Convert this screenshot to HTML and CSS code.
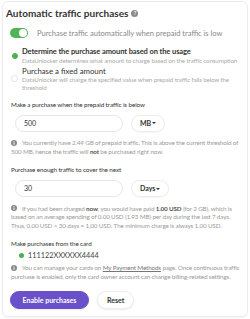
FILE: index.html
```html
<!DOCTYPE html>
<html>
<head>
<meta charset="utf-8">
<link rel="stylesheet" href="styles.css">
</head>
<body>
<div class="card">
  <div class="title">Automatic traffic purchases <span class="help">?</span></div>
  <div class="toggle-row">
    <span class="toggle"><span class="knob"></span></span>
    <span class="toggle-label">Purchase traffic automatically when prepaid traffic is low</span>
  </div>
  <div class="radio-row">
    <span class="radio checked"></span>
    <div class="radio-text">
      <div class="radio-title bold">Determine the purchase amount based on the usage</div>
      <div class="radio-desc">DataUnlocker determines what amount to charge based on the traffic consumption</div>
    </div>
  </div>
  <div class="radio-row second">
    <span class="radio"></span>
    <div class="radio-text">
      <div class="radio-title">Purchase a fixed amount</div>
      <div class="radio-desc">DataUnlocker will charge the specified value when prepaid traffic falls below the threshold</div>
    </div>
  </div>

  <div class="field-label first">Make a purchase when the prepaid traffic is below</div>
  <div class="inputs">
    <div class="input">500</div>
    <div class="select">MB <span class="caret"></span></div>
  </div>
  <div class="info"><svg class="i" viewBox="0 0 12 12"><circle cx="6" cy="6" r="6" fill="#888"/><rect x="5" y="5" width="2" height="4.5" fill="#fff"/><rect x="5" y="2.5" width="2" height="1.7" fill="#fff"/></svg>You currently have 2.49 GB of prepaid traffic. This is above the current threshold of 500 MB, hence the traffic will <b>not</b> be purchased right now.</div>

  <div class="field-label">Purchase enough traffic to cover the next</div>
  <div class="inputs">
    <div class="input">30</div>
    <div class="select">Days <span class="caret"></span></div>
  </div>
  <div class="info"><svg class="i" viewBox="0 0 12 12"><circle cx="6" cy="6" r="6" fill="#888"/><rect x="5" y="5" width="2" height="4.5" fill="#fff"/><rect x="5" y="2.5" width="2" height="1.7" fill="#fff"/></svg>If you had been charged <b>now</b>, you would have paid <b>1.00 USD</b> (for 2 GB), which is based on an average spending of 0.00 USD (1.93 MB) per day during the last 7 days. Thus, 0.00 USD × 30 days = 1.00 USD. The minimum charge is always 1.00 USD.</div>

  <div class="field-label">Make purchases from the card</div>
  <div class="card-row"><span class="dot"></span>111122XXXXXX4444</div>
  <div class="info tight"><svg class="i" viewBox="0 0 12 12"><circle cx="6" cy="6" r="6" fill="#888"/><rect x="5" y="5" width="2" height="4.5" fill="#fff"/><rect x="5" y="2.5" width="2" height="1.7" fill="#fff"/></svg>You can manage your cards on <u>My Payment Methods</u> page. Once continuous traffic purchase is enabled, only the card owner account can change billing-related settings.</div>

  <div class="buttons">
    <button class="btn primary">Enable purchases</button>
    <button class="btn">Reset</button>
  </div>
</div>
</body>
</html>
```

FILE: styles.css
```css
* { box-sizing: border-box; }
body {
  margin: 0;
  width: 250px;
  height: 319px;
  background: #fff;
  font-family: "Lato", "Noto Sans", sans-serif;
  color: #333;
  overflow: hidden;
}
.card {
  margin: 1px 2px 0 2px;
  height: 316px;
  border: 1px solid #ececec;
  border-radius: 6px;
  box-shadow: 0 1px 2px rgba(0,0,0,0.06);
  padding: 5px 2px 0 3px;
}
.title {
  font-weight: bold;
  font-size: 10px;
  line-height: 13px;
  display: flex;
  align-items: center;
  gap: 3px;
}
.help {
  width: 7px; height: 7px;
  border-radius: 50%;
  background: #8a8a8a;
  color: #fff;
  font-size: 5.5px;
  line-height: 7px;
  text-align: center;
}
.toggle-row {
  display: flex;
  align-items: center;
  gap: 9px;
  margin: 8px 0 0 4px;
}
.toggle {
  width: 18px; height: 10px;
  background: #52b45a;
  border-radius: 5px;
  position: relative;
}
.knob {
  position: absolute;
  right: 1px; top: 1px;
  width: 8px; height: 8px;
  border-radius: 50%;
  background: #fff;
}
.toggle-label {
  font-size: 7.5px;
  color: #888;
}
.radio-row {
  display: flex;
  gap: 4px;
  margin: 9px 0 0 5px;
}
.radio-row.second { margin-top: 0; }
.radio {
  flex: none;
  width: 7px; height: 7px;
  border-radius: 50%;
  margin-top: 9px;
  border: 1px solid #e4e4e4;
}
.radio.checked { width: 6px; height: 6px; background: #4caf50; border-color: #4caf50; margin: 6px 0.5px 0 0.5px; }
.radio-title { font-size: 7.8px; line-height: 10px; color: #333; }
.radio-title.bold { font-weight: bold; font-size: 7.5px; letter-spacing: -0.1px; }
.radio-desc { font-size: 6.2px; line-height: 8.5px; color: #aaa; letter-spacing: -0.12px; }
.field-label {
  font-size: 6.3px;
  line-height: 9px;
  margin: 9px 0 0 5px;
  color: #333;
  letter-spacing: -0.1px;
}
.field-label.first { margin-top: 7px; }
.inputs {
  display: flex;
  gap: 8px;
  margin: 6px 0 0 9px;
}
.input {
  width: 108px; height: 17px;
  border: 1px solid #e6e6e6;
  border-radius: 9px;
  font-size: 7px;
  line-height: 15px;
  padding-left: 8px;
}
.select {
  height: 17px;
  border: 1px solid #ececec;
  border-radius: 9px;
  font-size: 7px;
  font-weight: bold;
  line-height: 15px;
  padding: 0 8px;
  display: flex; align-items: center; gap: 1px;
  box-shadow: 0 1px 1px rgba(0,0,0,0.04);
}
.caret {
  width: 0; height: 0;
  border-left: 2px solid transparent;
  border-right: 2px solid transparent;
  border-top: 2.5px solid #333;
}
.info {
  font-size: 6.3px;
  line-height: 8.5px;
  color: #9a9a9a;
  margin: 7.5px 4px 0 5px;
  letter-spacing: -0.15px;
}
.info.tight { margin-top: 4px; }
.info b { color: #555; }
.info u { color: #777; }
.i {
  display: inline-block;
  width: 6px; height: 6px;
  margin-right: 5px;
  vertical-align: -0.5px;
}
.card-row {
  display: flex;
  align-items: center;
  gap: 4px;
  margin: 3px 0 0 13px;
  font-size: 7.3px;
  line-height: 9px;
  color: #444;
}
.dot { width: 5px; height: 5px; border-radius: 50%; background: #4caf50; }
.buttons {
  display: flex;
  gap: 8px;
  margin: 10px 0 0 4px;
}
.btn {
  font-family: inherit;
  font-size: 7px;
  font-weight: bold;
  height: 18px;
  border-radius: 9px;
  border: 1px solid #eee;
  background: #fff;
  color: #333;
  padding: 0 9px;
  box-shadow: 0 1px 2px rgba(0,0,0,0.08);
}
.btn.primary {
  background: #6a50c9;
  border-color: #6a50c9;
  color: #fff;
  width: 79px;
}
```
